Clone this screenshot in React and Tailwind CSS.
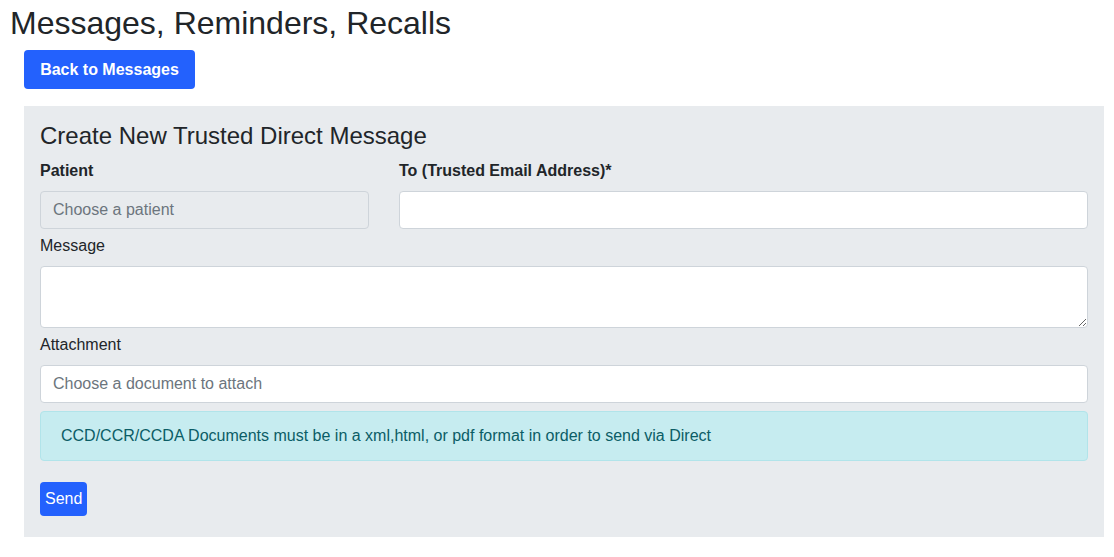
import React from 'react';

export default function App() {
  return (
    <div className="min-h-[557px] bg-white text-[#212529] font-['Liberation_Sans',Arial,sans-serif]">
      <h1 className="pl-[10px] pt-[4px] text-[32px] leading-[38px]">Messages, Reminders, Recalls</h1>

      <div className="pl-6 pr-[10px]">
        <button className="mt-2 h-[39px] w-[171px] rounded bg-[#2361fd] text-base font-bold text-white">
          Back to Messages
        </button>

        <div className="mt-[17px] bg-[#e8ebee] px-4 pt-[15px] pb-[21px]">
          <h2 className="text-2xl leading-[29px]">Create New Trusted Direct Message</h2>

          <div className="mt-[9px] grid grid-cols-[329px_1fr] gap-x-[30px]">
            <div>
              <label className="block text-base font-bold leading-6">Patient</label>
              <input
                disabled
                placeholder="Choose a patient"
                className="mt-2 h-[38px] w-full rounded border border-[#ced4da] bg-[#e8ebee] px-3 text-base placeholder:text-[#6c757d]"
              />
            </div>
            <div>
              <label className="block text-base font-bold leading-6">To (Trusted Email Address)*</label>
              <input className="mt-2 h-[38px] w-full rounded border border-[#ced4da] bg-white px-3 text-base" />
            </div>
          </div>

          <label className="mt-[5px] block text-base leading-6">Message</label>
          <textarea className="mt-2 block h-[62px] w-full rounded border border-[#ced4da] bg-white px-3 py-1.5 text-base" />

          <label className="mt-[5px] block text-base leading-6">Attachment</label>
          <input
            placeholder="Choose a document to attach"
            className="mt-2 block h-[38px] w-full rounded border border-[#ced4da] bg-white px-3 text-base placeholder:text-[#6c757d]"
          />

          <div className="mt-2 rounded border border-[#b1e4ea] bg-[#c6ecf0] px-5 py-3 text-base leading-6 text-[#0b5d66]">
            CCD/CCR/CCDA Documents must be in a xml,html, or pdf format in order to send via Direct
          </div>

          <button className="mt-[21px] h-[34px] rounded bg-[#2361fd] px-[5px] text-base text-white">Send</button>
        </div>
      </div>
    </div>
  );
}
